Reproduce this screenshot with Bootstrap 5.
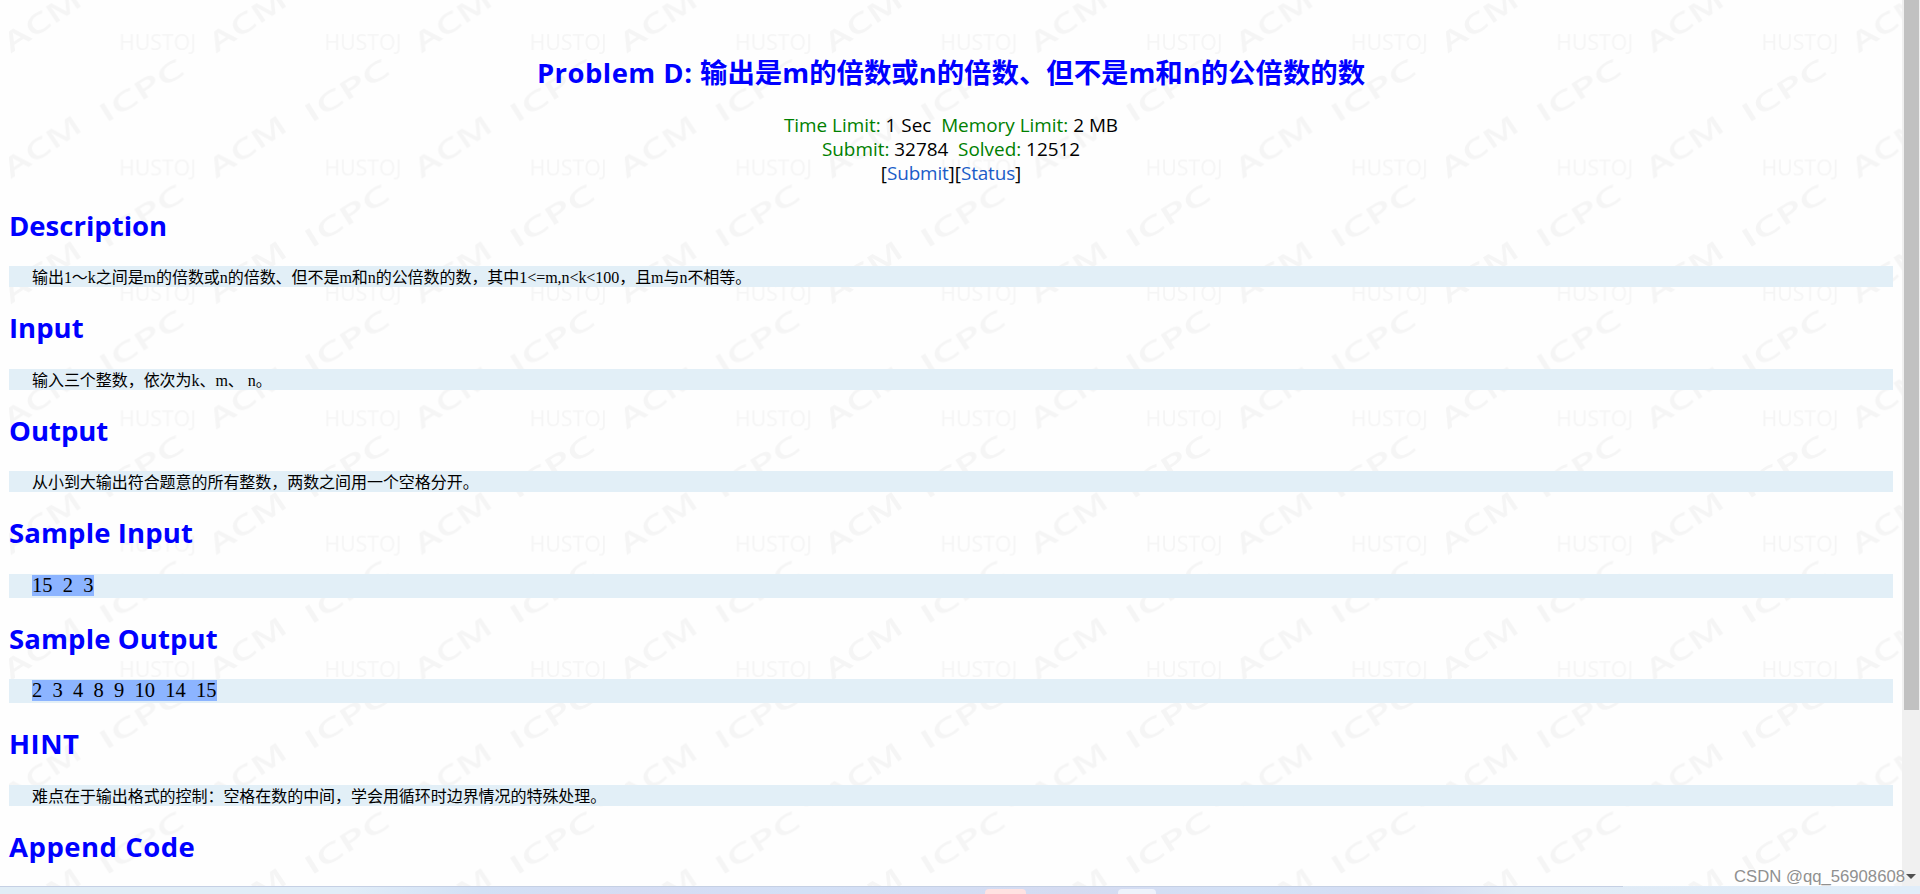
<!DOCTYPE html>
<html lang="zh-CN">
<head>
<meta charset="utf-8">
<title>Problem D</title>
<link href="https://cdn.jsdelivr.net/npm/bootstrap@5.3.0/dist/css/bootstrap.min.css" rel="stylesheet">
<style>
  body { font-family: "Open Sans", "Noto Sans CJK SC", sans-serif; color: #000; background: #fefefe; }
  .oj-wall { z-index: 0; }
  .oj-page { z-index: 1; padding-left: 9px; padding-right: 9px; }
  .oj-title, .oj-head { font-size: 27.5px; font-weight: 700; color: #00f; white-space: nowrap; }
  .oj-title { font-size: 27.4px; line-height: 38px; padding-top: 54px; height: 93px; }
  .oj-info { font-size: 18.9px; line-height: 24px; padding-top: 20px; height: 91.5px; }
  .oj-info > div { white-space: pre; }
  .oj-label { color: #008000; }
  .oj-info a { color: #1a5cc8; letter-spacing: -.15px; }
  .oj-head { line-height: 82.5px; height: 81.5px; }
  .oj-wide { letter-spacing: .5px; }
  .oj-mid { letter-spacing: .12px; }
  .oj-bar { background: #e2eff7; height: 21px; line-height: 24px; padding-left: 23px; font-family: "Liberation Serif", "Noto Sans CJK SC", serif; font-size: 16px; letter-spacing: -.05px; white-space: pre; }
  .oj-sample { height: 24px; padding-top: 1px; font-size: 20.5px; word-spacing: .25em; line-height: 21px; letter-spacing: 0; }
  .oj-picked { background: #8cb4ff; display: inline-block; height: 21px; line-height: 21px; }
  .oj-scroll { width: 18px; background: #f0f0f0; z-index: 1; }
  .oj-thumb { width: 15px; height: 710px; background: #c1c1c1; margin-left: 2px; }
  .oj-arrow { width: 10px; height: 5px; margin: 0 4px 7px auto; background: #505050; clip-path: polygon(0 0, 100% 0, 50% 100%); }
  .oj-sign { right: 15px; bottom: 7px; z-index: 3; font: 16.7px/20px "Liberation Sans", sans-serif; color: #909090; text-shadow: -1px -1px 0 #fff; }
  .oj-task { height: 8px; z-index: 2; background: linear-gradient(90deg, #e1edf6 0, #e1edf8 18%, #d2e0f5 25%, #d5dcf3 33%, #d3e0f6 42%, #d5dbf1 56%, #d3e1f6 65%, #d5dcf3 74%, #e1ebf6 79%, #e0edf9 100%); }
  .oj-edge { width: 1623px; height: 1px; background: #c5d0e4; }
  .oj-tab { width: 41px; height: 5px; border-radius: 4px 4px 0 0; top: 3px; left: 985px; background: #ffe2e2; }
  .oj-tab-b { left: 1118px; width: 38px; background: #eef2fb; }
</style>
</head>
<body class="overflow-hidden">
<div class="d-flex flex-column vh-100 position-relative">
  <svg class="oj-wall position-absolute top-0 start-0 w-100 h-100" aria-hidden="true">
    <defs>
      <pattern id="wall" x="0" y="56" width="205.3" height="125.4" patternUnits="userSpaceOnUse">
        <g fill="#f5f5f5" font-family="Open Sans, sans-serif">
          <text transform="translate(106 67.500) rotate(-32)" font-size="26" font-weight="600" textLength="95" lengthAdjust="spacingAndGlyphs">ICPC</text>
          <text transform="translate(11 123) rotate(-34)" font-size="27" font-weight="600" textLength="88" lengthAdjust="spacingAndGlyphs">ACM</text>
          <text x="119" y="119" font-size="22" textLength="77" lengthAdjust="spacingAndGlyphs">HUSTOJ</text>
        </g>
      </pattern>
    </defs>
    <rect width="1902" height="886" fill="url(#wall)"/>
  </svg>

  <div class="d-flex flex-grow-1 overflow-hidden">
    <main class="oj-page flex-grow-1 position-relative">
      <h1 class="oj-title text-center mb-0"><span class="oj-wide">Problem D: </span>输出是m的倍数或n的倍数、但不是m和n的公倍数的数</h1>
      <div class="oj-info text-center">
        <div><span class="oj-label">Time Limit: </span>1 Sec  <span class="oj-label">Memory Limit: </span>2 MB</div>
        <div><span class="oj-label">Submit: </span>32784  <span class="oj-label">Solved: </span>12512</div>
        <div>[<a href="#" class="text-decoration-none">Submit</a>][<a href="#" class="text-decoration-none">Status</a>]</div>
      </div>
      <h2 class="oj-head mb-0">Description</h2>
      <div class="oj-bar">输出1～k之间是m的倍数或n的倍数、但不是m和n的公倍数的数，其中1&lt;=m,n&lt;k&lt;100，且m与n不相等。</div>
      <h2 class="oj-head mb-0">Input</h2>
      <div class="oj-bar">输入三个整数，依次为k、m、 n。</div>
      <h2 class="oj-head mb-0">Output</h2>
      <div class="oj-bar">从小到大输出符合题意的所有整数，两数之间用一个空格分开。</div>
      <h2 class="oj-head oj-mid mb-0">Sample Input</h2>
      <div class="oj-bar oj-sample"><span class="oj-picked">15 2 3</span></div>
      <h2 class="oj-head oj-mid mb-0">Sample Output</h2>
      <div class="oj-bar oj-sample"><span class="oj-picked">2 3 4 8 9 10 14 15</span></div>
      <h2 class="oj-head oj-wide mb-0">HINT</h2>
      <div class="oj-bar">难点在于输出格式的控制：空格在数的中间，学会用循环时边界情况的特殊处理。</div>
      <h2 class="oj-head oj-wide mb-0">Append Code</h2>
    </main>
    <div class="oj-scroll flex-shrink-0 d-flex flex-column justify-content-between">
      <div class="oj-thumb"></div>
      <div class="oj-arrow"></div>
    </div>
  </div>
  <div class="oj-task position-relative flex-shrink-0">
    <div class="oj-edge"></div>
    <div class="oj-tab position-absolute"></div>
    <div class="oj-tab oj-tab-b position-absolute"></div>
  </div>
  <div class="oj-sign position-absolute">CSDN @qq_56908608</div>
</div>
<script src="https://cdn.jsdelivr.net/npm/bootstrap@5.3.0/dist/js/bootstrap.bundle.min.js"></script>
</body>
</html>
